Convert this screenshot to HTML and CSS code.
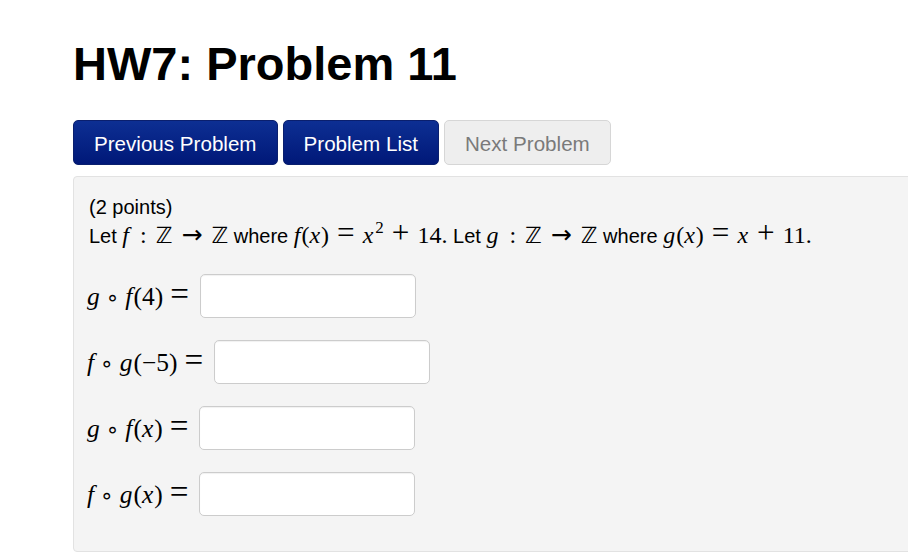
FILE: index.html
```html
<!DOCTYPE html>
<html lang="en">
<head>
<meta charset="utf-8">
<title>HW7: Problem 11</title>
<link rel="stylesheet" href="styles.css">
</head>
<body>
<div class="page">
  <h1 class="title">HW7: Problem 11</h1>
  <div class="nav">
    <button class="btn btn-primary">Previous Problem</button>
    <button class="btn btn-primary">Problem List</button>
    <button class="btn btn-disabled" disabled>Next Problem</button>
  </div>
  <div class="panel">
    <div class="points">(2 points)</div>
    <div class="statement">Let <span class="m"><i>f</i><span class="colon">:</span><span class="ds">ℤ</span><span class="arrow">→</span><span class="ds">ℤ</span></span> where <span class="m"><i>f</i>(<i>x</i>)<span class="rel">=</span><i>x</i><sup>2</sup><span class="bin">+</span>14.</span> Let <span class="m"><i>g</i><span class="colon">:</span><span class="ds">ℤ</span><span class="arrow">→</span><span class="ds">ℤ</span></span> where <span class="m"><i>g</i>(<i>x</i>)<span class="rel">=</span><i>x</i><span class="bin">+</span>11.</span></div>
    <div class="answers">
      <div class="row"><span class="m label"><i>g</i><span class="ring">∘</span><i>f</i>(4)<span class="rel">=</span></span><input class="ans" type="text"></div>
      <div class="row"><span class="m label"><i>f</i><span class="ring">∘</span><i>g</i>(−5)<span class="rel">=</span></span><input class="ans" type="text"></div>
      <div class="row"><span class="m label"><i>g</i><span class="ring">∘</span><i>f</i>(<i>x</i>)<span class="rel">=</span></span><input class="ans" type="text"></div>
      <div class="row"><span class="m label"><i>f</i><span class="ring">∘</span><i>g</i>(<i>x</i>)<span class="rel">=</span></span><input class="ans" type="text"></div>
    </div>
  </div>
</div>
</body>
</html>
```

FILE: styles.css
```css
html, body {
  margin: 0;
  padding: 0;
  background: #ffffff;
  overflow: hidden;
}

body {
  font-family: "Liberation Sans", Arial, sans-serif;
  color: #000;
}

.page {
  padding: 36px 0 0 73px;
}

.title {
  margin: 0;
  font-size: 47px;
  line-height: 56px;
  font-weight: bold;
}

.nav {
  display: flex;
  gap: 5px;
  margin-top: 28px;
}

.btn {
  font-family: "Liberation Sans", Arial, sans-serif;
  font-size: 20.6px;
  line-height: 27px;
  padding: 9px 20px 7px;
  border-radius: 5px;
  border: 1px solid;
  margin: 0;
}

.btn-primary {
  color: #ffffff;
  background: linear-gradient(#0d2f93, #001878);
  border-color: #0a1f6e;
}

.btn-disabled {
  color: #7a7a7a;
  background: #eeeeee;
  border-color: #d6d6d6;
}

.panel {
  margin-top: 11px;
  width: 900px;
  background: #f4f4f4;
  border: 1px solid #e2e2e2;
  border-radius: 4px;
  padding: 16px 15px 35px;
  font-size: 20px;
  line-height: 28px;
}

.m {
  font-family: "Liberation Serif", "DejaVu Serif", serif;
  font-size: 24px;
}

.m i {
  font-style: italic;
  padding-right: 1px;
}

.m sup {
  font-size: 17px;
  line-height: 0;
  vertical-align: 10px;
  margin-left: 1px;
}

.ds {
  font-family: "DejaVu Sans", sans-serif;
  font-size: 22.5px;
  line-height: 0;
}

.colon {
  margin: 0 9px 0 10px;
  line-height: 0;
}

.arrow {
  margin: 0 9px;
  font-family: "DejaVu Sans", sans-serif;
  font-size: 25px;
  line-height: 0;
}

.rel {
  margin: 0 8px;
  font-size: 1.3em;
  line-height: 0;
}

.bin {
  margin: 0 8px;
  font-size: 1.3em;
  line-height: 0;
}

.ring {
  margin: 0 6px 0 5px;
  font-family: "DejaVu Sans", sans-serif;
  font-size: 0.85em;
  line-height: 0;
}

.answers {
  display: flex;
  flex-direction: column;
  gap: 22px;
  margin-top: 24px;
}

.row {
  display: flex;
  align-items: center;
  height: 44px;
}

.label {
  font-size: 25.5px;
  line-height: 28px;
  margin-left: -2px;
  padding-top: 2px;
}

.label .rel {
  margin: 0 11px 0 7px;
}

.ans {
  box-sizing: border-box;
  width: 216px;
  height: 44px;
  margin: 0;
  border: 1px solid #cccccc;
  border-radius: 5px;
  background: #ffffff;
  box-shadow: inset 0 1px 1px rgba(0, 0, 0, 0.06);
  font-size: 20px;
  padding: 4px 8px;
}
```
